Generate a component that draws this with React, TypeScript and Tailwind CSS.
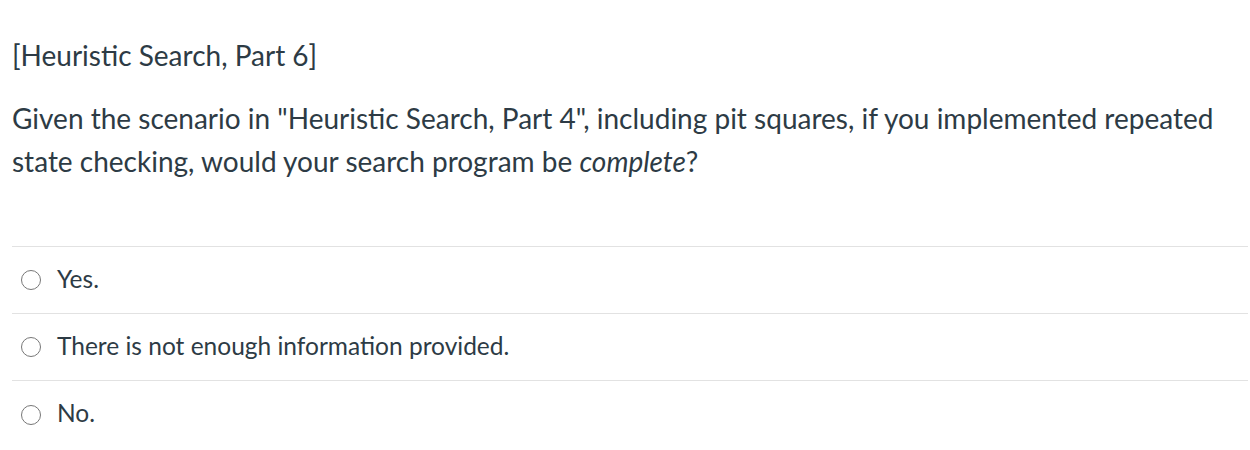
import React from "react";

const options = ["Yes.", "There is not enough information provided.", "No."];

export default function App() {
  return (
    <div
      className="w-[1250px] h-[450px] bg-white text-[#2d3b45] overflow-hidden"
      style={{ fontFamily: "Lato, 'Noto Sans', sans-serif" }}
    >
      <div className="pl-[12px] pr-[2px] pt-[36px]">
        <p className="text-[28px] leading-[38px] m-0">[Heuristic Search, Part 6]</p>
        <p className="text-[28px] leading-[43px] mt-[23px]">
          Given the scenario in "Heuristic Search, Part 4", including pit squares, if you implemented repeated state
          checking, would your search program be <em>complete</em>?
        </p>
        <div className="mt-[63px] border-t-[1.5px] border-[#e2e2e2]">
          {options.map((o) => (
            <div key={o} className="h-[67px] flex items-center border-b-[1.5px] border-[#e2e2e2] last:border-b-0">
              <span className="ml-[9px] w-[20px] h-[20px] rounded-full border-[1.5px] border-[#777] bg-white shrink-0" />
              <span className="ml-[16px] text-[24.5px] leading-[30px] -mt-[3px]">{o}</span>
            </div>
          ))}
        </div>
      </div>
    </div>
  );
}
